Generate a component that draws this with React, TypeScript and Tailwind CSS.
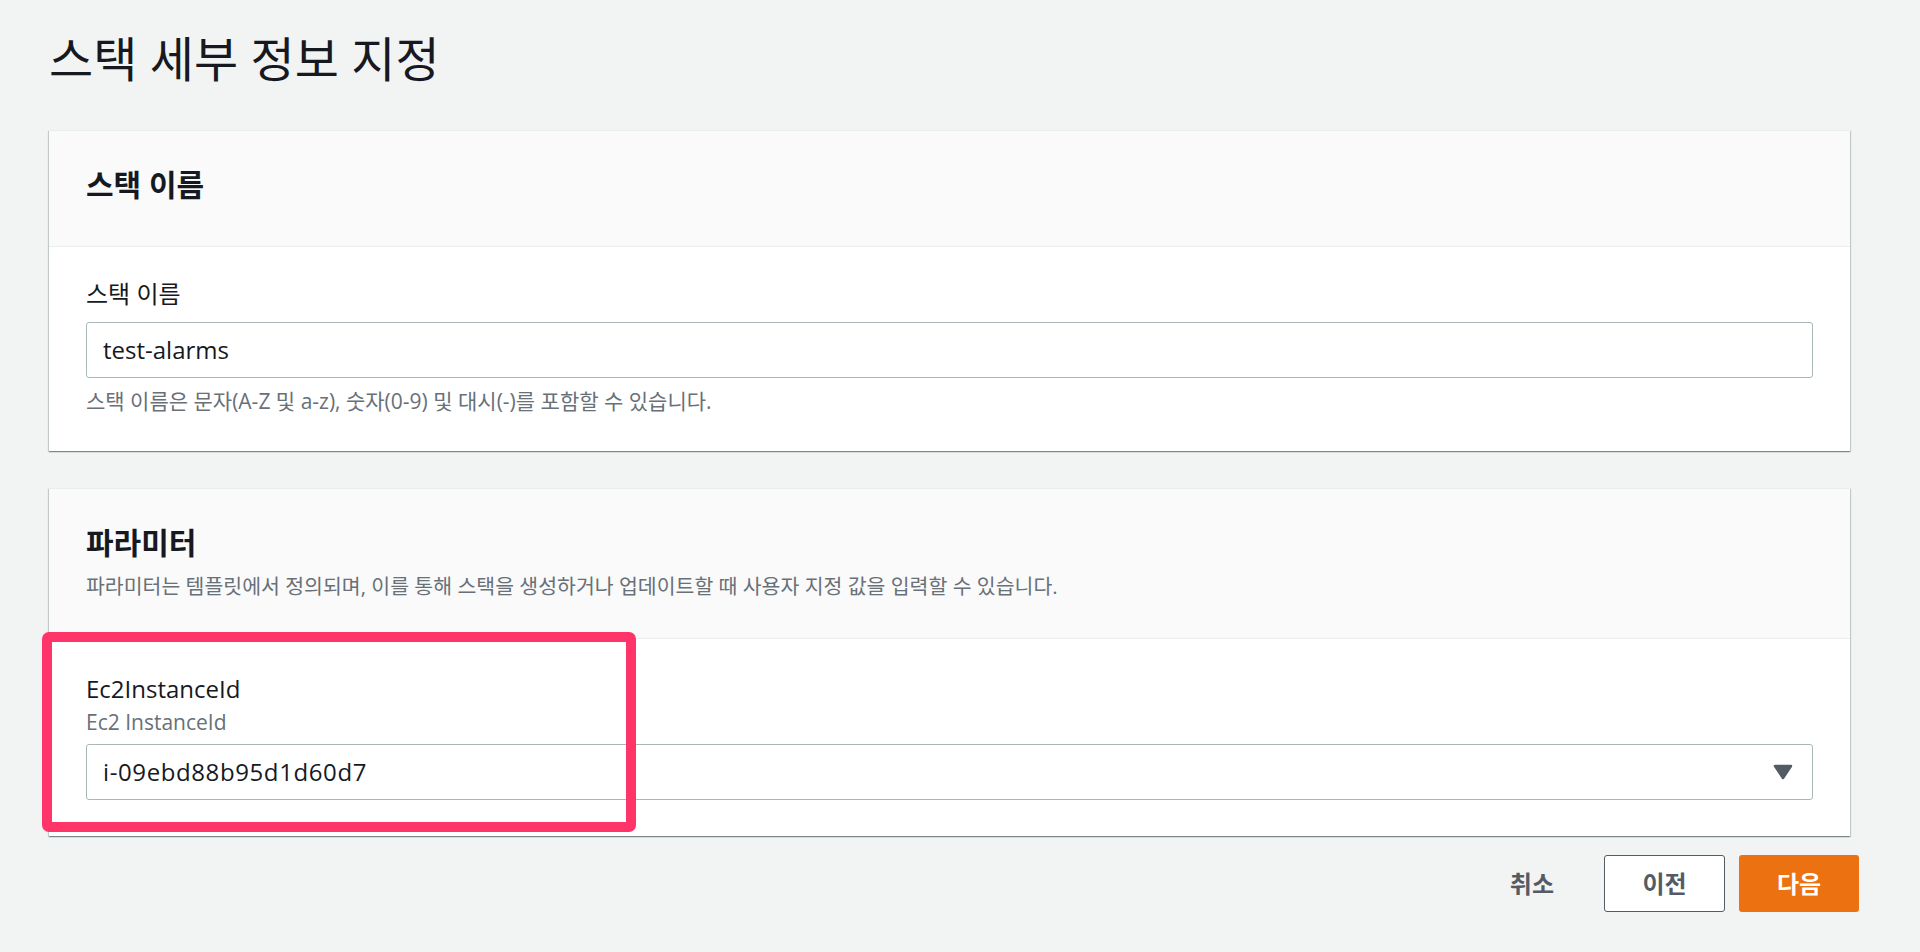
import type { FC, ReactNode } from 'react';

const ko = "font-['Open_Sans','Noto_Sans_CJK_KR',sans-serif]";

const panelShadow =
  'shadow-[0_1px_1px_0_rgba(0,28,36,0.3),1px_1px_1px_0_rgba(0,28,36,0.15),-1px_1px_1px_0_rgba(0,28,36,0.15)]';

interface PanelProps {
  header: ReactNode;
  children: ReactNode;
  bodyClass: string;
}

const Panel: FC<PanelProps> = ({ header, children, bodyClass }) => {
  return (
    <div className={`bg-white border-t border-[#eaeded] ${panelShadow}`}>
      <div className="bg-[#fafafa] border-b border-[#eaeded] px-[37px]">{header}</div>
      <div className={`relative px-[37px] ${bodyClass}`}>{children}</div>
    </div>
  );
};

const CaretDown: FC = () => (
  <svg width="20" height="16" viewBox="0 0 20 16" aria-hidden="true">
    <polygon
      points="2,2 18,2 10,14"
      fill="#545b64"
      stroke="#545b64"
      strokeWidth="2.5"
      strokeLinejoin="round"
    />
  </svg>
);

export default function App() {
  return (
    <div className={`min-h-screen bg-[#f2f3f3] pl-[49px] pr-[61px] pt-[30px] text-[#16191f] ${ko}`}>
      <h1 className="text-[48px] leading-[58px] font-normal mb-[42px]">스택 세부 정보 지정</h1>

      <div className="mr-[9px] flex flex-col gap-[37px]">
        {/* Stack name */}
        <Panel
          bodyClass="pt-[32px] pb-[37px]"
          header={
            <div className="pt-[36px] pb-[43px]">
              <h2 className="text-[30px] leading-[36px] font-bold">스택 이름</h2>
            </div>
          }
        >
          <label className="block text-[24px] leading-[30px]">스택 이름</label>
          <div className="mt-[13px] h-[56px] border border-[#aab7b8] rounded-[3px] flex items-center pl-[16px] bg-white">
            <span className="font-['Open_Sans',sans-serif] text-[24px]">test-alarms</span>
          </div>
          <p className="mt-[10px] text-[21px] leading-[26px] text-[#687078]">
            스택 이름은 문자(A-Z 및 a-z), 숫자(0-9) 및 대시(-)를 포함할 수 있습니다.
          </p>
        </Panel>

        {/* Parameters */}
        <Panel
          bodyClass="pt-[35px] pb-[36px]"
          header={
            <div className="pt-[36px] pb-[39px]">
              <h2 className="text-[30px] leading-[36px] font-bold">파라미터</h2>
              <p className="mt-[12px] text-[20.5px] leading-[26px] text-[#687078]">
                파라미터는 템플릿에서 정의되며, 이를 통해 스택을 생성하거나 업데이트할 때 사용자 지정 값을 입력할 수 있습니다.
              </p>
            </div>
          }
        >
          <div className="font-['Open_Sans',sans-serif] text-[24px] leading-[30px]">Ec2InstanceId</div>
          <div className="mt-[5px] font-['Open_Sans',sans-serif] text-[21px] leading-[26px] text-[#687078]">
            Ec2 InstanceId
          </div>
          <div className="mt-[9px] h-[56px] border border-[#aab7b8] rounded-[3px] flex items-center justify-between pl-[16px] pr-[19px] bg-white">
            <span className="font-['Open_Sans',sans-serif] text-[24px] tracking-[0.6px]">i-09ebd88b95d1d60d7</span>
            <CaretDown />
          </div>

          {/* highlight annotation */}
          <div className="absolute left-[-7px] top-[-7px] w-[594px] h-[200px] border-[10px] border-[#ff3569] rounded-[7px] pointer-events-none" />
        </Panel>
      </div>

      {/* Actions */}
      <div className="mt-[19px] flex justify-end items-center">
        <button className="px-[20px] h-[57px] text-[24px] font-bold text-[#545b64]">취소</button>
        <button className="ml-[30px] w-[121px] h-[57px] border border-[#545b64] rounded-[3px] bg-white text-[24px] font-bold text-[#545b64]">
          이전
        </button>
        <button className="ml-[14px] w-[120px] h-[57px] rounded-[3px] bg-[#ec7211] text-[24px] font-bold text-white">
          다음
        </button>
      </div>
    </div>
  );
}
